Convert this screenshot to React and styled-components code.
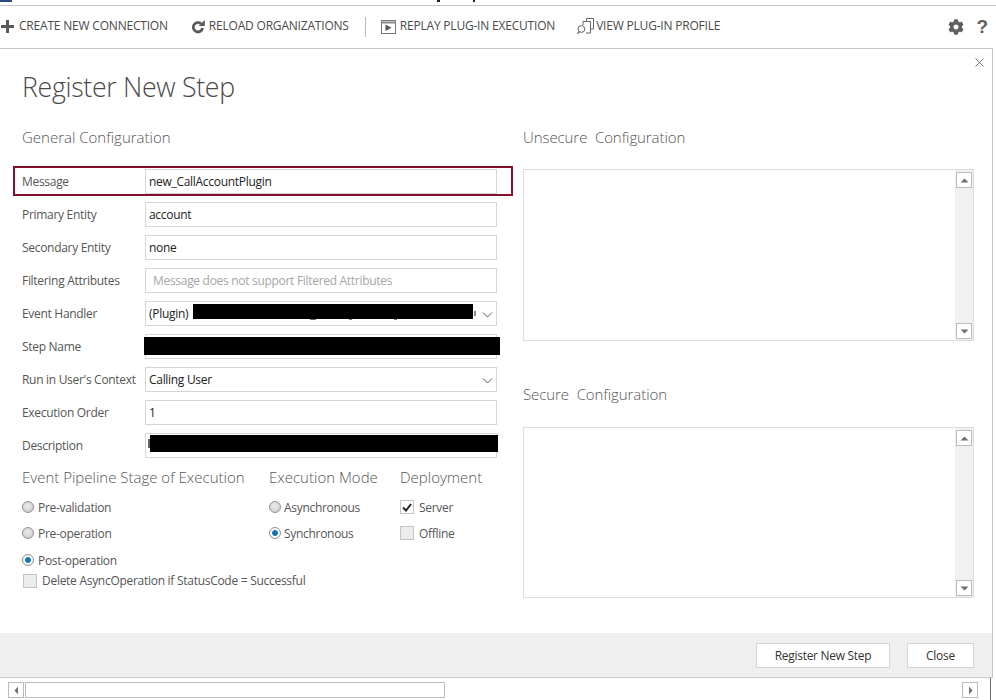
import React from 'react';
import styled, { createGlobalStyle } from 'styled-components';
import { FaCog } from 'react-icons/fa';

const Global = createGlobalStyle`
  html, body { margin: 0; padding: 0; background: #fff; }
  body { width: 996px; height: 700px; overflow: hidden; font-family: "Open Sans", "Liberation Sans", sans-serif; }
  * { box-sizing: border-box; }
`;

const Page = styled.div`
  width: 996px; height: 700px; display: flex; flex-direction: column; overflow: hidden; background: #fff;
`;
const TopStrip = styled.div`
  height: 6px; flex: none; border-bottom: 1px solid #c6c6c6; position: relative;
`;
const StripMark = styled.span`
  position: absolute; top: 0; height: 2px; background: ${p => p.$c || '#222'};
  left: ${p => p.$x}px; width: ${p => p.$w}px;
`;
const Toolbar = styled.div`
  height: 42px; flex: none; display: flex; align-items: center; padding: 0 8px 1px 1px; color: #444;
`;
const ToolButton = styled.div`
  display: flex; align-items: center; gap: ${p => p.$gap ?? 4}px; margin-right: ${p => p.$mr ?? 22}px;
`;
const ToolText = styled.span`
  font-size: 12px; letter-spacing: -0.2px; white-space: nowrap; color: #4a4a4a; padding-bottom: 2px;
`;
const ToolDivider = styled.div`
  width: 1px; height: 20px; background: #bbb; margin-right: 15px;
`;
const ToolSpacer = styled.div`flex: 1;`;
const HelpMark = styled.span`
  font-family: "Liberation Sans", sans-serif; font-size: 19px; font-weight: 700; color: #5f5f5f; margin-left: 12px; line-height: 1;
`;

const Dialog = styled.div`
  width: 993px; height: 630px; flex: none; border: 1px solid #c6c6c6; border-left: 0; display: flex; flex-direction: column; position: relative;
`;
const CloseX = styled.svg`
  position: absolute; right: 8px; top: 9px; width: 9px; height: 9px;
`;
const Body = styled.div`
  flex: 1; display: flex; padding: 0 18px 0 22px;
`;
const LeftCol = styled.div`
  width: 475px; flex: none; margin-right: 26px;
`;
const RightCol = styled.div`
  flex: 1; padding-top: 78px;
`;
const Title = styled.h1`
  margin: 0; height: 78px; padding-top: 17px; font-size: 26.7px; line-height: 42px; font-weight: 300; color: #4a4a4a; letter-spacing: -0.3px; white-space: nowrap;
`;
const SectionTitle = styled.div`
  font-size: 15px; line-height: 20px; font-weight: 300; color: #555; height: ${p => p.$h ?? 42}px; letter-spacing: ${p => p.$ls ?? 0}px; white-space: pre;
`;
const Row = styled.div`
  height: 33px; display: flex; position: relative;
`;
const RowLabel = styled.div`
  width: 123px; flex: none; font-size: 12px; line-height: 25px; color: #555; letter-spacing: -0.3px; white-space: nowrap;
`;
const Field = styled.div`
  width: 352px; height: 25px; flex: none; border: 1px solid #d6d6d6; display: flex; align-items: center; padding: 0 3px 1px; font-size: 12px; color: ${p => p.$muted ? '#a6a6a6' : '#222'}; position: relative; letter-spacing: -0.3px; white-space: nowrap;
  padding-left: ${p => p.$muted ? 7 : 3}px;
`;
const Chevron = styled.svg`
  position: absolute; right: 3px; top: 9px; width: 11px; height: 7px;
`;
const Highlight = styled.div`
  position: absolute; left: -9px; top: -3px; width: 500px; height: 30px; border: 2px solid #80102c; pointer-events: none;
`;
const Redaction = styled.div`
  position: absolute; background: ${p => p.$c || '#000'}; left: ${p => p.$l}px; top: ${p => p.$t}px; width: ${p => p.$w}px; height: ${p => p.$h}px;
`;
const Options = styled.div`
  display: flex; margin-top: 1px;
`;
const OptionGroup = styled.div`
  width: ${p => p.$w}px; flex: none;
`;
const GroupTitle = styled.div`
  font-size: 15px; line-height: 20px; font-weight: 300; color: #555; margin-bottom: 7px; white-space: nowrap; letter-spacing: 0;
`;
const Option = styled.div`
  height: ${p => p.$h || 26.3}px; margin-top: ${p => p.$mt || 0}px; display: flex; align-items: center; font-size: 12px; color: #555; letter-spacing: -0.3px; white-space: nowrap;
`;
const Radio = styled.span`
  width: 12px; height: 12px; border-radius: 50%; flex: none; margin-right: ${p => p.$mr ?? 4}px;
  border: 1px solid #929292;
  background: ${p => p.$on
    ? 'radial-gradient(circle, #0a6aa8 0, #1a7fc0 2.6px, #fff 3.3px, #e4e4e4 100%)'
    : 'radial-gradient(circle at 45% 40%, #ececec, #c6c6c6)'};
`;
const Check = styled.span`
  width: 14px; height: 14px; flex: none; border: 1px solid #c4c4c4; background: ${p => p.$on ? '#fff' : '#ececec'}; margin-right: 5px; display: flex; align-items: center; justify-content: center;
`;
const DeleteRow = styled.div`
  height: 16px; display: flex; align-items: center; font-size: 12px; color: #555; letter-spacing: -0.28px; white-space: nowrap; margin: 0 0 0 1px;
`;
const TextBox = styled.div`
  width: 451px; height: ${p => p.$h}px; border: 1px solid #dcdcdc; margin-bottom: ${p => p.$mb || 0}px; display: flex; justify-content: flex-end;
`;
const VBar = styled.div`
  width: 18px; height: 100%; background: #f1f1f1; display: flex; flex-direction: column; justify-content: space-between; padding: 2px 1px 1px;
`;
const ScrollBtn = styled.div`
  width: 16px; height: 16px; flex: none; background: #fff; border: 1px solid #bcbcbc; display: flex; align-items: center; justify-content: center;
`;
const Arrow = styled.svg`
  width: 9px; height: 9px; display: block;
`;
const Footer = styled.div`
  height: 44px; flex: none; background: #efefef; display: flex; align-items: center; justify-content: flex-end; padding: 1px 18px 0 0; gap: 17px;
`;
const FootButton = styled.div`
  width: ${p => p.$w}px; height: 25px; background: #fff; border: 1px solid #d4d4d4; font-size: 12px; color: #333; display: flex; align-items: center; justify-content: center; letter-spacing: -0.3px;
`;
const BottomBar = styled.div`
  flex: 1; display: flex; align-items: flex-start; padding: 4px 0 0 8px; position: relative;
`;
const HTrack = styled.div`
  width: 420px; height: 16px; border: 1px solid #bcbcbc; background: #fff; margin-left: 1px; margin-right: 517px;
`;
const EdgeLine = styled.div`
  position: absolute; right: 5px; top: 0; bottom: 0; width: 1px; background: #666;
`;

const up = <Arrow viewBox="0 0 9 9"><path d="M4.5 2.5 L8.5 6.5 H0.5 Z" fill="#707070" /></Arrow>;
const down = <Arrow viewBox="0 0 9 9"><path d="M4.5 6.5 L8.5 2.5 H0.5 Z" fill="#707070" /></Arrow>;
const left = <Arrow viewBox="0 0 9 9"><path d="M2.5 4.5 L6 0.5 V8.5 Z" fill="#707070" /></Arrow>;
const right = <Arrow viewBox="0 0 9 9"><path d="M6.5 4.5 L3 0.5 V8.5 Z" fill="#707070" /></Arrow>;
const chev = <Chevron viewBox="0 0 11 7"><path d="M1 1.5 L5.5 6 L10 1.5" fill="none" stroke="#555" strokeWidth="1" /></Chevron>;

const VScroll = () => <VBar><ScrollBtn>{up}</ScrollBtn><ScrollBtn>{down}</ScrollBtn></VBar>;

export default function App() {
  return (
    <Page>
      <Global />
      <TopStrip>
        <StripMark $x={0} $w={12} $c="#2b4a80" />
        <StripMark $x={437} $w={3} />
        <StripMark $x={473} $w={2} />
      </TopStrip>
      <Toolbar>
        <ToolButton $mr={23} $gap={5}>
          <svg width="13" height="13" viewBox="0 0 13 13"><path d="M5 0h3v5h5v3H8v5H5V8H0V5h5z" fill="#595959" /></svg>
          <ToolText>CREATE NEW CONNECTION</ToolText>
        </ToolButton>
        <ToolButton $mr={16} $gap={4}>
          <svg width="14" height="14" viewBox="0 0 14 14"><path d="M11.6 8A4.7 4.7 0 1 1 10 3.6" fill="none" stroke="#595959" strokeWidth="2.7" /><path d="M7.6 6H13.8V0Z" fill="#595959" /></svg>
          <ToolText>RELOAD ORGANIZATIONS</ToolText>
        </ToolButton>
        <ToolDivider />
        <ToolButton $mr={22} $gap={4}>
          <svg width="15" height="14" viewBox="0 0 15 14"><rect x="0.5" y="0.5" width="14" height="13" fill="#fff" stroke="#777" /><path d="M0 2.5h15" stroke="#888" strokeWidth="2" /><path d="M4.5 4.5l6 3.2-6 3.3z" fill="#555" /></svg>
          <ToolText>REPLAY PLUG-IN EXECUTION</ToolText>
        </ToolButton>
        <ToolButton $mr={0} $gap={1}>
          <svg width="18" height="17" viewBox="0 0 18 17" fill="none" stroke="#666"><path d="M9.5 3V.5h7v10.5h-2.5" /><path d="M6 7V3.5h7.5v11.5H9" /><circle cx="4.4" cy="11" r="3.4" /><path d="M2.2 13.6L.6 15.8" strokeWidth="1.4" /></svg>
          <ToolText>VIEW PLUG-IN PROFILE</ToolText>
        </ToolButton>
        <ToolSpacer />
        <FaCog size={16} color="#5f5f5f" />
        <HelpMark>?</HelpMark>
      </Toolbar>
      <Dialog>
        <CloseX viewBox="0 0 9 9"><path d="M.5.5l8 8M8.5.5l-8 8" stroke="#777" strokeWidth="1" /></CloseX>
        <Body>
          <LeftCol>
            <Title>Register New Step</Title>
            <SectionTitle>General Configuration</SectionTitle>
            <Row>
              <RowLabel>Message</RowLabel>
              <Field>new_CallAccountPlugin</Field>
              <Highlight />
            </Row>
            <Row><RowLabel>Primary Entity</RowLabel><Field>account</Field></Row>
            <Row><RowLabel>Secondary Entity</RowLabel><Field>none</Field></Row>
            <Row><RowLabel>Filtering Attributes</RowLabel><Field $muted>Message does not support Filtered Attributes</Field></Row>
            <Row>
              <RowLabel>Event Handler</RowLabel>
              <Field>
                (Plugin){chev}
                <Redaction $l={47} $t={2} $w={280} $h={15} />
                <Redaction $l={164} $t={17} $w={6} $h={1} $c="#666" />
                <Redaction $l={203} $t={17} $w={3} $h={1} $c="#777" />
                <Redaction $l={248} $t={17} $w={3} $h={1} $c="#777" />
                <Redaction $l={328} $t={9} $w={2} $h={5} $c="#888" />
              </Field>
            </Row>
            <Row>
              <RowLabel>Step Name</RowLabel>
              <Field><Redaction $l={-2} $t={2} $w={356} $h={18} /></Field>
            </Row>
            <Row><RowLabel>Run in User's Context</RowLabel><Field>Calling User{chev}</Field></Row>
            <Row><RowLabel>Execution Order</RowLabel><Field>1</Field></Row>
            <Row>
              <RowLabel>Description</RowLabel>
              <Field>
                <Redaction $l={2} $t={5} $w={2} $h={9} $c="#666" />
                <Redaction $l={4} $t={1} $w={348} $h={17} />
              </Field>
            </Row>
            <Options>
              <OptionGroup $w={247}>
                <GroupTitle>Event Pipeline Stage of Execution</GroupTitle>
                <Option><Radio />Pre-validation</Option>
                <Option><Radio />Pre-operation</Option>
                <Option $h={25} $mt={1}><Radio $on />Post-operation</Option>
                <DeleteRow><Check />Delete AsyncOperation if StatusCode = Successful</DeleteRow>
              </OptionGroup>
              <OptionGroup $w={131}>
                <GroupTitle>Execution Mode</GroupTitle>
                <Option><Radio $mr={3} />Asynchronous</Option>
                <Option><Radio $mr={3} $on />Synchronous</Option>
              </OptionGroup>
              <OptionGroup $w={97}>
                <GroupTitle>Deployment</GroupTitle>
                <Option>
                  <Check $on>
                    <svg width="10" height="9" viewBox="0 0 10 9"><path d="M1 4.5l3 3L9 1" fill="none" stroke="#222" strokeWidth="2" /></svg>
                  </Check>Server
                </Option>
                <Option><Check />Offline</Option>
              </OptionGroup>
            </Options>
          </LeftCol>
          <RightCol>
            <SectionTitle $ls={-0.08}>Unsecure  Configuration</SectionTitle>
            <TextBox $h={172} $mb={43}><VScroll /></TextBox>
            <SectionTitle $ls={-0.08} $h={43}>Secure  Configuration</SectionTitle>
            <TextBox $h={171}><VScroll /></TextBox>
          </RightCol>
        </Body>
        <Footer>
          <FootButton $w={134}>Register New Step</FootButton>
          <FootButton $w={67}>Close</FootButton>
        </Footer>
      </Dialog>
      <BottomBar>
        <ScrollBtn>{left}</ScrollBtn>
        <HTrack />
        <ScrollBtn>{right}</ScrollBtn>
        <EdgeLine />
      </BottomBar>
    </Page>
  );
}
